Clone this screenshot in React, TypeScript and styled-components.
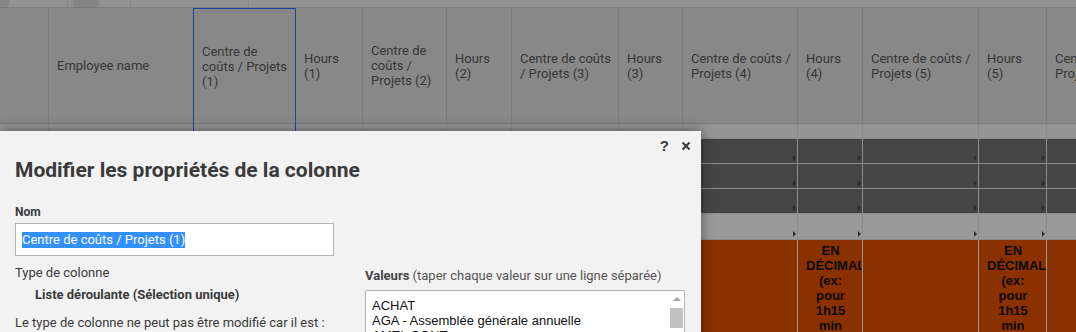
import React from "react";
import styled, { createGlobalStyle } from "styled-components";

const Global = createGlobalStyle`
  html, body { margin: 0; padding: 0; width: 1076px; height: 332px; overflow: hidden; background: #8a8a8a; }
  #root { width: 1076px; height: 332px; }
  * { box-sizing: border-box; }
`;

const COLS = "49px 145px 102px 67px 84px 65px 107px 64px 115px 65px 116px 68px 120px";

const Page = styled.div`
  position: relative;
  width: 1076px;
  height: 332px;
  overflow: hidden;
  font-family: Roboto, "Liberation Sans", Arial, sans-serif;
`;

const Sheet = styled.div`
  display: flex;
  flex-direction: column;
  width: 1200px;
`;

const TopStrip = styled.div`
  height: 8px;
  background: #929292;
  border-bottom: 1px solid #7c7c7c;
  display: grid;
  grid-template-columns: 9px 59px 5px 26px 32px 118px 1fr;
`;

const StripPart = styled.div<{ $tab?: boolean; $line?: boolean }>`
  height: 7px;
  background: ${(p) => (p.$tab ? "#858585" : "transparent")};
  border-radius: ${(p) => (p.$tab ? "0 0 3px 3px" : "0")};
  border-right: ${(p) => (p.$line ? "1px solid #858585" : "none")};
`;

const Row = styled.div<{ $h: number; $bg: string; $line: string }>`
  display: grid;
  grid-template-columns: ${COLS};
  height: ${(p) => p.$h}px;
  background: ${(p) => p.$bg};
  border-bottom: 1px solid ${(p) => p.$line};
`;

const HeadCell = styled.div<{ $sel?: boolean }>`
  display: flex;
  align-items: center;
  padding: 0 6px 0 8px;
  border-right: 1px solid #7c7c7c;
  color: #363636;
  font-size: 13px;
  line-height: 15px;
  position: relative;
  ${(p) =>
    p.$sel
      ? "border-top: 1px solid #12489a; border-left: 1px solid #12489a; border-right: 1px solid #12489a; margin-left: -1px; padding-left: 8px; margin-bottom: -1px; z-index: 1;"
      : ""}
`;

const BodyCell = styled.div<{ $line: string; $sel?: boolean }>`
  position: relative;
  border-right: 1px solid ${(p) => p.$line};
  overflow: hidden;
  ${(p) => (p.$sel ? "border-left: 1px solid #12489a; border-right: 1px solid #12489a; margin-left: -1px;" : "")}
`;

const Marker = styled.span`
  position: absolute;
  right: 1px;
  bottom: 2px;
  width: 0;
  height: 0;
  border-top: 3px solid transparent;
  border-bottom: 3px solid transparent;
  border-left: 3px solid #2c2c2c;
`;

const HintText = styled.div`
  font-family: "Liberation Sans", Arial, sans-serif;
  font-weight: bold;
  font-size: 13px;
  line-height: 15px;
  color: #0a0a0a;
  text-align: center;
  padding: 3px 7px 0 8px;
`;

const HintLine = styled.div`
  white-space: nowrap;
`;

const Dialog = styled.div`
  position: absolute;
  left: 0;
  top: 131px;
  width: 701px;
  height: 240px;
  background: #f2f2f2;
  box-shadow: 0 0 12px rgba(0, 0, 0, 0.45);
  padding: 0 15px;
  color: #333;
`;

const DialogTools = styled.div`
  display: flex;
  justify-content: flex-end;
  align-items: center;
  gap: 12px;
  height: 28px;
  padding-top: 1px;
  margin-right: -5px;
`;

const ToolText = styled.span`
  font-family: "Liberation Sans", Arial, sans-serif;
  font-weight: bold;
  font-size: 15px;
  color: #3a3a3a;
`;

const Title = styled.h1`
  margin: 0;
  font-size: 21px;
  line-height: 24px;
  font-weight: bold;
  color: #3a3a3a;
  margin-top: -1px;
`;

const Body = styled.div`
  display: flex;
  gap: 31px;
  margin-top: 22px;
`;

const LeftCol = styled.div`
  width: 319px;
  display: flex;
  flex-direction: column;
`;

const RightCol = styled.div`
  width: 320px;
  display: flex;
  flex-direction: column;
  padding-top: 64px;
`;

const Label = styled.div`
  font-size: 12px;
  line-height: 16px;
  font-weight: bold;
  color: #3a3a3a;
`;

const NameInput = styled.div`
  margin-top: 3px;
  height: 33px;
  background: #fff;
  border: 1px solid #b3b3b3;
  padding: 8px 0 0 6px;
  font-size: 13px;
  line-height: 15px;
`;

const Selected = styled.span`
  background: #3390ff;
  color: #fff;
  padding: 0 0 1px;
`;

const Text = styled.div<{ $indent?: number; $top: number; $bold?: boolean }>`
  font-size: 13px;
  line-height: 16px;
  color: #3a3a3a;
  margin-top: ${(p) => p.$top}px;
  padding-left: ${(p) => p.$indent || 0}px;
  font-weight: ${(p) => (p.$bold ? "bold" : "normal")};
  white-space: nowrap;
`;

const Strong = styled.b`
  color: #444;
`;

const Muted = styled.span`
  color: #555;
`;

const ValuesBox = styled.div`
  margin-top: 6px;
  height: 60px;
  background: #fff;
  border: 1px solid #b3b3b3;
  border-radius: 2px;
  display: flex;
  overflow: hidden;
`;

const ValuesText = styled.div`
  flex: 1;
  padding: 7px 0 0 6px;
  font-family: "Liberation Sans", Arial, sans-serif;
  font-size: 13px;
  line-height: 15px;
  color: #111;
`;

const Scrollbar = styled.div`
  width: 15px;
  display: flex;
  flex-direction: column;
  align-items: center;
  padding-top: 6px;
`;

const ScrollArrow = styled.div`
  width: 0;
  height: 0;
  border-left: 4px solid transparent;
  border-right: 4px solid transparent;
  border-bottom: 4px solid #a3a3a3;
`;

const Thumb = styled.div`
  margin-top: 7px;
  width: 13px;
  height: 20px;
  background: #c1c1c1;
`;

const headers = [
  "",
  "Employee name",
  "Centre de coûts / Projets (1)",
  "Hours (1)",
  "Centre de coûts / Projets (2)",
  "Hours (2)",
  "Centre de coûts / Projets (3)",
  "Hours (3)",
  "Centre de coûts / Projets (4)",
  "Hours (4)",
  "Centre de coûts / Projets (5)",
  "Hours (5)",
  "Centre de coûts / Projets (6)",
];

const hint = ["EN", "DÉCIMAL", "(ex:", "pour", "1h15", "min"];

const bodyRows = [
  { h: 15, bg: "#959595", line: "#8a8a8a", marker: false },
  { h: 25, bg: "#454545", line: "#8c8c8c", marker: true },
  { h: 25, bg: "#454545", line: "#8c8c8c", marker: true },
  { h: 25, bg: "#454545", line: "#8c8c8c", marker: true },
  { h: 26, bg: "#999999", line: "#8c8c8c", marker: true },
];

export default function App() {
  return (
    <Page>
      <Global />
      <Sheet>
        <TopStrip>
          <StripPart $tab />
          <StripPart $line />
          <StripPart />
          <StripPart $tab />
          <StripPart $line />
          <StripPart $line />
          <StripPart />
        </TopStrip>
        <Row $h={116} $bg="#888888" $line="#7c7c7c">
          {headers.map((h, i) => (
            <HeadCell key={i} $sel={i === 2}>
              {h}
            </HeadCell>
          ))}
        </Row>
        {bodyRows.map((r, ri) => (
          <Row key={ri} $h={r.h} $bg={r.bg} $line={r.line}>
            {headers.map((_, i) => (
              <BodyCell key={i} $line={r.line} $sel={i === 2 && ri === 0}>
                {r.marker && <Marker />}
              </BodyCell>
            ))}
          </Row>
        ))}
        <Row $h={100} $bg="#8b3100" $line="#8b3100">
          {headers.map((_, i) => (
            <BodyCell key={i} $line="#9a9a9a">
              {(i === 9 || i === 11) && (
                <HintText>
                  {hint.map((t) => (
                    <HintLine key={t}>{t}</HintLine>
                  ))}
                </HintText>
              )}
            </BodyCell>
          ))}
        </Row>
      </Sheet>

      <Dialog>
        <DialogTools>
          <ToolText>?</ToolText>
          <svg width="10" height="10" viewBox="0 0 10 10">
            <path d="M1.5 1.5 L8.5 8.5 M8.5 1.5 L1.5 8.5" stroke="#3a3a3a" strokeWidth="2" />
          </svg>
        </DialogTools>
        <Title>Modifier les propriétés de la colonne</Title>
        <Body>
          <LeftCol>
            <Label>Nom</Label>
            <NameInput>
              <Selected>Centre de coûts / Projets (1)</Selected>
            </NameInput>
            <Text $top={9}>Type de colonne</Text>
            <Text $top={6} $indent={20} $bold>
              Liste déroulante (Sélection unique)
            </Text>
            <Text $top={12}>Le type de colonne ne peut pas être modifié car il est :</Text>
          </LeftCol>
          <RightCol>
            <Text $top={0}>
              <Strong>Valeurs</Strong> <Muted>(taper chaque valeur sur une ligne séparée)</Muted>
            </Text>
            <ValuesBox>
              <ValuesText>
                ACHAT
                <br />
                AGA - Assemblée générale annuelle
                <br />
                AMEL CONT
              </ValuesText>
              <Scrollbar>
                <ScrollArrow />
                <Thumb />
              </Scrollbar>
            </ValuesBox>
          </RightCol>
        </Body>
      </Dialog>
    </Page>
  );
}
